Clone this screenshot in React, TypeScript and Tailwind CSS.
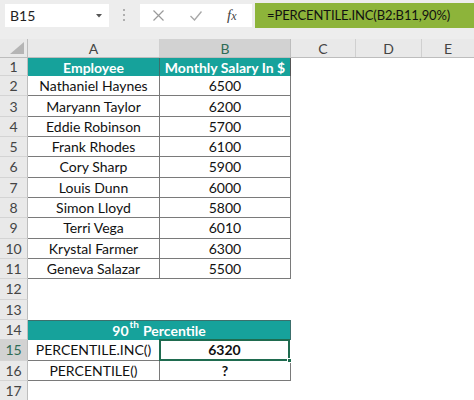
import React from "react";

const data: [string, string][] = [
  ["Nathaniel Haynes", "6500"],
  ["Maryann Taylor", "6200"],
  ["Eddie Robinson", "5700"],
  ["Frank Rhodes", "6100"],
  ["Cory Sharp", "5900"],
  ["Louis Dunn", "6000"],
  ["Simon Lloyd", "5800"],
  ["Terri Vega", "6010"],
  ["Krystal Farmer", "6300"],
  ["Geneva Salazar", "5500"],
];

const font = { fontFamily: "Lato, 'Open Sans', sans-serif" };

function RowHead({ n, sel }: { n: number; sel?: boolean }) {
  return (
    <div
      className={`w-[28px] shrink-0 h-full flex items-center justify-center border-r border-b border-[#d4d4d4] border-r-[#bdbdbd] text-[14px] ${
        sel ? "bg-[#d2d2d2] text-[#2f6b55]" : "bg-[#e9e9e9] text-[#444]"
      }`}
    >
      {n}
    </div>
  );
}

export default function App() {
  return (
    <div className="w-[474px] h-[400px] overflow-hidden bg-white text-[#111]" style={font}>
      {/* Formula bar */}
      <div className="h-[39px] bg-[#ededed] flex items-start pt-[4px] relative">
        <div className="ml-[5px] w-[104px] h-[23px] bg-white flex items-center justify-between pl-[5px] pr-[7px] text-[14px] text-[#222]">
          <span>B15</span>
          <svg width="6" height="4" viewBox="0 0 6 4">
            <path d="M0 0 L6 0 L3 3.5 Z" fill="#555" />
          </svg>
        </div>
        <div className="ml-[14px] mt-[5px] flex flex-col gap-[3px]">
          <div className="w-[2px] h-[2px] bg-[#9a9a9a] rounded-full" />
          <div className="w-[2px] h-[2px] bg-[#9a9a9a] rounded-full" />
          <div className="w-[2px] h-[2px] bg-[#9a9a9a] rounded-full" />
        </div>
        <div className="ml-[15px] w-[112px] h-[23px] bg-white flex items-center">
          <svg className="ml-[13px]" width="11" height="11" viewBox="0 0 11 11">
            <path d="M0.5 0.5 L10.5 10.5 M10.5 0.5 L0.5 10.5" stroke="#9a9a9a" strokeWidth="1.2" fill="none" />
          </svg>
          <svg className="ml-[26px]" width="12" height="10" viewBox="0 0 12 10">
            <path d="M0.5 5 L4.5 9 L11.5 0.5" stroke="#a8a8a8" strokeWidth="1.4" fill="none" />
          </svg>
          <span
            className="ml-[25px] text-[15px] italic text-[#444]"
            style={{ fontFamily: "'Liberation Serif', serif" }}
          >
            f<span className="text-[12px]">x</span>
          </span>
        </div>
        <div className="ml-[3px] mt-[-1px] flex-1 h-[25px] bg-[#8db43a] flex items-center pl-[12px] text-[13px] tracking-[-0.1px] text-[#111] whitespace-nowrap">
          =PERCENTILE.INC(B2:B11,90%)
        </div>
      </div>

      {/* Column header */}
      <div className="h-[19px] flex text-[14px] text-[#444] bg-[#e9e9e9] border-b border-[#bdbdbd]">
        <div className="w-[28px] shrink-0 h-full relative border-r border-[#bdbdbd]">
          <svg className="absolute right-[3px] bottom-[3px]" width="14" height="12" viewBox="0 0 14 12">
            <path d="M14 0 L14 12 L0 12 Z" fill="#b5b5b5" />
          </svg>
        </div>
        <div className="w-[132px] shrink-0 flex items-center justify-center border-r border-[#d0d0d0]">A</div>
        <div className="w-[131px] shrink-0 flex items-center justify-center bg-[#d2d2d2] text-[#2f6b55] border-r border-[#bdbdbd]">B</div>
        <div className="w-[65px] shrink-0 flex items-center justify-center border-r border-[#d0d0d0]">C</div>
        <div className="w-[66px] shrink-0 flex items-center justify-center border-r border-[#d0d0d0]">D</div>
        <div className="flex-1 flex items-center justify-center">E</div>
      </div>

      {/* Row 1 */}
      <div className="h-[18px] flex text-[14px]">
        <RowHead n={1} />
        <div className="w-[132px] shrink-0 bg-[#16a29b] text-white font-bold flex items-center justify-center border-r border-[#3c6f6c]">
          Employee
        </div>
        <div className="w-[131px] shrink-0 bg-[#16a29b] text-white font-bold flex items-center justify-center border-r border-[#555]">
          Monthly Salary In $
        </div>
      </div>

      {data.map(([name, sal], i) => (
        <div key={name} className="h-[20.33px] flex text-[14px]">
          <RowHead n={i + 2} />
          <div className="w-[132px] shrink-0 flex items-center justify-center border-b border-r border-[#7a7a7a]">
            {name}
          </div>
          <div className="w-[131px] shrink-0 flex items-center justify-center border-b border-r border-[#7a7a7a]">
            {sal}
          </div>
        </div>
      ))}

      <div className="h-[20.33px] flex text-[14px]">
        <RowHead n={12} />
      </div>
      <div className="h-[20.33px] flex text-[14px]">
        <RowHead n={13} />
      </div>
      <div className="h-[20.33px] flex text-[14px]">
        <RowHead n={14} />
        <div className="w-[263px] shrink-0 bg-[#16a29b] text-white font-bold flex items-center justify-center border-t border-r border-[#3c6f6c]">
          <span className="flex items-start">
            <span>90</span>
            <span className="text-[10px] leading-none mt-[-1px] ml-[1px] mr-[4px]">th</span>
            <span>Percentile</span>
          </span>
        </div>
      </div>
      <div className="h-[20.33px] flex text-[14px]">
        <RowHead n={15} sel />
        <div className="w-[132px] shrink-0 flex items-center justify-center border-b border-r border-[#7a7a7a]">
          PERCENTILE.INC()
        </div>
        <div className="w-[131px] shrink-0 relative flex items-center justify-center font-bold border-2 border-[#1f6b4f] ml-[-1px] mt-[-1px] h-[21.33px]">
          6320
          <div className="absolute right-[-4px] bottom-[-4px] w-[5px] h-[5px] bg-[#1f6b4f] border border-white" />
        </div>
      </div>
      <div className="h-[20.33px] flex text-[14px]">
        <RowHead n={16} />
        <div className="w-[132px] shrink-0 flex items-center justify-center border-b border-r border-[#7a7a7a]">
          PERCENTILE()
        </div>
        <div className="w-[131px] shrink-0 flex items-center justify-center font-bold border-b border-r border-[#7a7a7a]">
          ?
        </div>
      </div>
      <div className="h-[20.33px] flex text-[14px]">
        <RowHead n={17} />
      </div>
    </div>
  );
}
